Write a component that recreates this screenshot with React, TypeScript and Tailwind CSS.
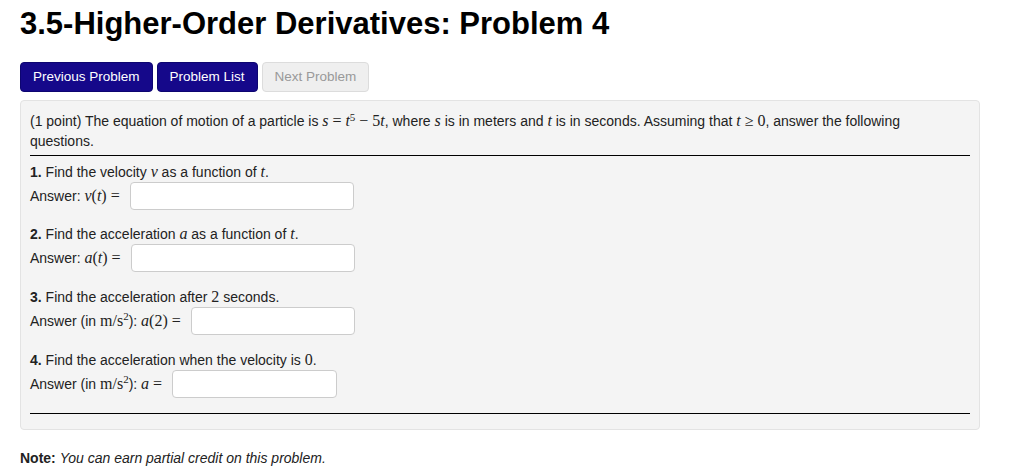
const M = ({ children }: { children: React.ReactNode }) => (
  <span className="italic text-[16px]" style={{ fontFamily: '"Liberation Serif", serif' }}>
    {children}
  </span>
);

const R = ({ children }: { children: React.ReactNode }) => (
  <span className="text-[16px]" style={{ fontFamily: '"Liberation Serif", serif' }}>
    {children}
  </span>
);

const Sup = ({ children }: { children: React.ReactNode }) => (
  <sup className="text-[11px]" style={{ fontFamily: '"Liberation Serif", serif' }}>
    {children}
  </sup>
);

const Box = ({ w }: { w: string }) => (
  <input
    type="text"
    className={`${w} h-[28px] ml-[10px] bg-white border border-[#cccccc] rounded-[4px]`}
  />
);

export default function App() {
  return (
    <div className="min-h-screen bg-white text-[#222] px-[20px] text-[14px]" style={{ fontFamily: '"Liberation Sans", Arial, sans-serif' }}>
      <h1 className="text-[31px] font-bold text-black pt-[6px] leading-[36px]">
        3.5-Higher-Order Derivatives: Problem 4
      </h1>

      <div className="flex gap-[4px] mt-[20px]">
        <button className="h-[30px] px-[12px] rounded-[4px] bg-[#15088a] border border-[#0d0570] text-white text-[13.5px]">
          Previous Problem
        </button>
        <button className="h-[30px] px-[12px] rounded-[4px] bg-[#15088a] border border-[#0d0570] text-white text-[13.5px]">
          Problem List
        </button>
        <button className="h-[30px] px-[12px] rounded-[4px] bg-[#efefef] border border-[#dcdcdc] text-[#999] text-[13.5px]">
          Next Problem
        </button>
      </div>

      <div className="mt-[8px] w-[960px] bg-[#f4f4f4] border border-[#e3e3e3] rounded-[4px] px-[9px] pt-[10px] pb-[15px]">
        <p className="leading-[20px] pr-[50px]">
          (1 point) The equation of motion of a particle is <M>s</M> <R>=</R> <M>t</M>
          <Sup>5</Sup> <R>− 5</R>
          <M>t</M>, where <M>s</M> is in meters and <M>t</M> is in seconds. Assuming that <M>t</M> <R>≥ 0</R>, answer the following questions.
        </p>
        <hr className="mt-[4px] border-t border-black" />

        <div className="mt-[6px]">
          <div className="leading-[20px]"><b>1.</b> Find the velocity <M>v</M> as a function of <M>t</M>.</div>
          <div className="flex items-center h-[28px]">
            <span>Answer:&nbsp;</span><M>v</M><R>(</R><M>t</M><R>)&nbsp;=</R><Box w="w-[224px]" />
          </div>
        </div>

        <div className="mt-[14px]">
          <div className="leading-[20px]"><b>2.</b> Find the acceleration <M>a</M> as a function of <M>t</M>.</div>
          <div className="flex items-center h-[28px]">
            <span>Answer:&nbsp;</span><M>a</M><R>(</R><M>t</M><R>)&nbsp;=</R><Box w="w-[224px]" />
          </div>
        </div>

        <div className="mt-[15px]">
          <div className="leading-[20px]"><b>3.</b> Find the acceleration after <R>2</R> seconds.</div>
          <div className="flex items-center h-[28px]">
            <span>Answer (in&nbsp;</span><R>m/s</R><Sup>2</Sup><span>):&nbsp;</span><M>a</M><R>(2)&nbsp;=</R><Box w="w-[164px]" />
          </div>
        </div>

        <div className="mt-[15px]">
          <div className="leading-[20px]"><b>4.</b> Find the acceleration when the velocity is <R>0</R>.</div>
          <div className="flex items-center h-[28px]">
            <span>Answer (in&nbsp;</span><R>m/s</R><Sup>2</Sup><span>):&nbsp;</span><M>a</M><R>&nbsp;=</R><Box w="w-[165px]" />
          </div>
        </div>

        <hr className="mt-[15px] border-t border-black" />
      </div>

      <p className="mt-[20px] leading-[16px]">
        <b>Note:</b> <i>You can earn partial credit on this problem.</i>
      </p>
    </div>
  );
}
